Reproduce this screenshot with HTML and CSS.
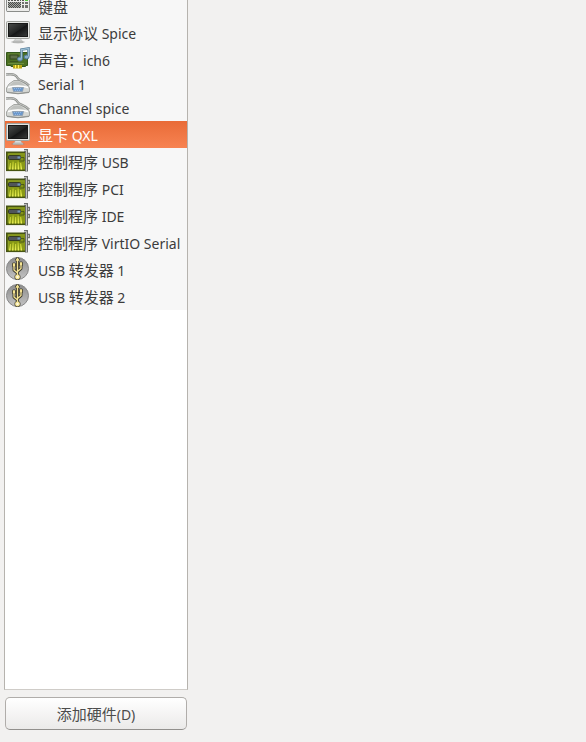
FILE: index.html
```
<!DOCTYPE html>
<html lang="zh-CN">
<head>
<meta charset="utf-8">
<title>虚拟硬件</title>
<link rel="stylesheet" href="styles.css">
</head>
<body>
<svg class="defs" aria-hidden="true">
  <defs>
    <linearGradient id="screen" x1="0" y1="0" x2="1" y2="1">
      <stop offset="0" stop-color="#4b4d4b"/><stop offset=".5" stop-color="#222423"/><stop offset=".55" stop-color="#151616"/><stop offset="1" stop-color="#3b3d3c"/>
    </linearGradient>
    <linearGradient id="metal" x1="0" y1="0" x2="0" y2="1">
      <stop offset="0" stop-color="#f8f8f8"/><stop offset="1" stop-color="#a5a7a5"/>
    </linearGradient>
    <linearGradient id="board" x1="0" y1="0" x2="0" y2="1">
      <stop offset="0" stop-color="#7f9016"/><stop offset="1" stop-color="#8d9d16"/>
    </linearGradient>
    <linearGradient id="pins" x1="0" y1="0" x2="0" y2="1">
      <stop offset="0" stop-color="#b5c421"/><stop offset="1" stop-color="#eef25a"/>
    </linearGradient>
    <linearGradient id="disc" x1="0" y1="0" x2="0" y2="1">
      <stop offset="0" stop-color="#8b8b8b"/><stop offset="1" stop-color="#c4c4c4"/>
    </linearGradient>
    <symbol id="keyboard" viewBox="0 0 24 24">
      <rect x=".5" y="4.500" width="23" height="14" rx="1" fill="#ececea" stroke="#8b8d8a"/>
      <path d="M1 18.500h22" stroke="#8b8d8a"/>
      <path d="M2 7.500h13M16 7.500h2" stroke="#555753" stroke-dasharray="2 1"/>
      <path d="M19 7.500h3" stroke="#55c83d"/>
      <path d="M2 9h13v6H2z" fill="#a3a5a1"/>
      <path d="M2 9.500h13M2 11.500h13M2 13.500h13" stroke="#4a4c49" stroke-dasharray="1 1"/>
      <path d="M3 10.500h12M3 12.500h12M3 14.500h12" stroke="#4a4c49" stroke-dasharray="1 1"/>
      <path d="M16 9h2v2h-2zM19 9h3v2h-3zM16 12h2v3h-2zM19 12h3v3h-3z" fill="#6d6f6b"/>
    </symbol>
    <symbol id="monitor" viewBox="0 0 24 24">
      <ellipse cx="12" cy="22" rx="7" ry="1.500" fill="#888" opacity=".4"/>
      <path d="M9 18h6v2l2 1.500v1H7v-1L9 20z" fill="url(#metal)" stroke="#b1b3b0" stroke-width=".5"/>
      <rect x=".5" y="1.500" width="23" height="17" rx="1" fill="#e4e5e2" stroke="#a0a29d"/>
      <rect x="2.500" y="3.500" width="19" height="13" fill="url(#screen)" stroke="#181918"/>
    </symbol>
    <symbol id="sound" viewBox="0 0 24 24">
      <path d="M.5 5.500h21v13h-2v1H5v-1H.5z" fill="#4c7023" stroke="#34571c"/>
      <path d="M2 7h12M2 16.500h16" stroke="#6c8d3d" fill="none"/>
      <rect x="4" y="8" width="8" height="4" fill="#5f7048" stroke="#34451f"/>
      <path d="M4 14.500h8" stroke="#3b551f"/>
      <path d="M7 18h9v3.500H7z" fill="#baa715"/>
      <path d="M9.500 18v3.500M12.500 18v3.500" stroke="#fff15c"/>
      <path d="M15.500 11.500V2.500l7-1v8" fill="none" stroke="#4d7594" stroke-width="2.500"/>
      <ellipse cx="14" cy="12" rx="2.500" ry="2" fill="#88afc8" stroke="#4d7594"/>
      <ellipse cx="20.500" cy="10" rx="2.500" ry="2" fill="#88afc8" stroke="#4d7594"/>
      <path d="M15.500 11.500V2.500l7-1v8" fill="none" stroke="#9bbfd4" stroke-width="1.300"/>
    </symbol>
    <symbol id="serial" viewBox="0 0 24 24">
      <path d="M8 7.500h7l7 4.500 1.500 3v4q-11.500 3-23 0v-4L3 11z" fill="#d5d7d4" stroke="#a5a7a4"/>
      <path d="M8 8.500h6l5 4H3.500z" fill="#bfc1be"/>
      <path d="M2 14.500q10-3 20 0" fill="none" stroke="#fff" stroke-width="1.500"/>
      <path d="M0 1.500c8-1 10 .5 12 4 2 2.500 7 2.500 11 7" fill="none" stroke="#8f918e" stroke-width="2.500"/>
      <path d="M0 1.500c8-1 10 .5 12 4 2 2.500 7 2.500 11 7" fill="none" stroke="#c8cac7"/>
      <path d="M1 19.500q11 2.500 22 0" fill="none" stroke="#8f918e"/>
      <path d="M6.500 14.500h11l-1 4h-9z" fill="#6c98cc" stroke="#8b99a9" stroke-width=".7"/>
      <path d="M8 15.500h8M9 17.500h6" stroke="#94b8e2" stroke-dasharray="1 1"/>
    </symbol>
    <symbol id="card" viewBox="0 0 24 24">
      <rect x=".8" y="3.300" width="19" height="18" fill="url(#board)" stroke="#465412" stroke-width="1.600"/>
      <path d="M2.500 5h16M2.500 5v15" stroke="#93a42b" stroke-width=".8"/>
      <path d="M4 14l1 .1-.5 6.400H3zM6.500 12.500h1.200l-.2 8H6zM9 14h1.200v6.500H8.800zM11.500 12.500h1.200l.5 8h-1.500zM14 14h1.200l1 6.500h-1.500z" fill="url(#pins)"/>
      <rect x="2.500" y="6.500" width="12" height="4" rx="1" fill="#50555a" stroke="#343b22"/>
      <path d="M11.500 7.500h3v2h-3z" fill="#7195b8"/>
      <path d="M15 8.500h3v3.500h-5" fill="none" stroke="#4b5a16"/>
      <path d="M18 1.500h2.500v21" fill="none" stroke="#6c6e6c" stroke-width="3"/>
      <path d="M18 1.500h2.500v21" fill="none" stroke="#c2c4c1"/>
      <path d="M22 4.500h1.500v3H22M22 11.500h1.500v3H22" fill="none" stroke="#747674" stroke-width="1.500"/>
    </symbol>
    <symbol id="usb" viewBox="0 0 24 24">
      <circle cx="11.500" cy="11.500" r="11" fill="url(#disc)" stroke="#888"/>
      <g fill="#3b392c" stroke="#3b392c" stroke-width="3" stroke-linejoin="round">
        <path d="M11.500 20V3M11.500 16l-3.500-3V8M11.500 14.500l3.500-3V7" fill="none"/><path d="M10.500 3l1-1.500 1 1.500zM7.500 7h1v1.500h-1zM14.500 6h1v1.500h-1z"/><circle cx="11.500" cy="20" r="1.500"/>
      </g>
      <g fill="#fff3a7" stroke="#f5e494" stroke-width="1.300">
        <path d="M11.500 20V3M11.500 16l-3.500-3V8M11.500 14.500l3.500-3V7" fill="none"/><path d="M10.500 3l1-1.500 1 1.500zM7.500 7h1v1.500h-1zM14.500 6h1v1.500h-1z"/><circle cx="11.500" cy="20" r="1.800" fill="#fffbe5"/>
      </g>
    </symbol>
  </defs>
</svg>
<main class="window">
  <aside class="sidebar">
    <ul class="devices">
      <li class="device"><svg class="icon"><use href="#keyboard"/></svg><span>键盘</span></li>
      <li class="device"><svg class="icon"><use href="#monitor"/></svg><span>显示协议<span class="latin"> Spice</span></span></li>
      <li class="device"><svg class="icon"><use href="#sound"/></svg><span>声音：<span class="latin">ich6</span></span></li>
      <li class="device compact"><svg class="icon"><use href="#serial"/></svg><span class="latin">Serial 1</span></li>
      <li class="device compact"><svg class="icon"><use href="#serial"/></svg><span class="latin">Channel spice</span></li>
      <li class="device selected"><svg class="icon"><use href="#monitor"/></svg><span>显卡<span class="latin"> QXL</span></span></li>
      <li class="device"><svg class="icon"><use href="#card"/></svg><span>控制程序<span class="latin"> USB</span></span></li>
      <li class="device"><svg class="icon"><use href="#card"/></svg><span>控制程序<span class="latin"> PCI</span></span></li>
      <li class="device"><svg class="icon"><use href="#card"/></svg><span>控制程序<span class="latin"> IDE</span></span></li>
      <li class="device"><svg class="icon"><use href="#card"/></svg><span>控制程序<span class="latin"> VirtIO Serial</span></span></li>
      <li class="device"><svg class="icon"><use href="#usb"/></svg><span><span class="latin">USB </span>转发器<span class="latin"> 1</span></span></li>
      <li class="device"><svg class="icon"><use href="#usb"/></svg><span><span class="latin">USB </span>转发器<span class="latin"> 2</span></span></li>
    </ul>
    <button class="add" type="button">添加硬件<span class="latin">(D)</span></button>
  </aside>
</main>
</body>
</html>
```
FILE: styles.css
```
* { box-sizing: border-box; }

body {
  margin: 0;
  background: #f2f1f0;
  color: #3c3c3c;
  font: 15px/24px "Noto Sans CJK SC", sans-serif;
}

.defs {
  position: absolute;
  width: 0;
  height: 0;
}

.window {
  display: flex;
  height: 100vh;
  overflow: hidden;
}

.sidebar {
  display: flex;
  flex-direction: column;
  width: 188px;
  padding: 0 0 12px 4px;
}

/* The list is scrolled a little, so its first row is cut by the window edge. */
.devices {
  flex: 1;
  margin: -8px 0 7px;
  padding: 0;
  list-style: none;
  background: #fff;
  border: 1px solid #b6b3ae;
  border-top: 0;
  border-bottom-color: #cfccc8;
}

.device {
  display: flex;
  align-items: flex-end;
  gap: 8px;
  height: 27px;
  padding: 1px 0 0 1px;
  background: #f7f7f7;
  white-space: nowrap;
}

.compact {
  height: 24px;
  padding-top: 0;
}

.selected {
  color: #fff;
  background: linear-gradient(#e96b37, #f78352);
}

.icon {
  flex: none;
  align-self: flex-start;
  width: 24px;
  height: 24px;
}

.latin {
  font-family: "Noto Sans", sans-serif;
  font-size: 14px;
}

.add {
  height: 33px;
  margin: 0 1px;
  padding: 2px 0 0;
  color: #4c4c4c;
  font: inherit;
  background: linear-gradient(#fff, #ebeae9);
  border: 1px solid #b0adaa;
  border-bottom-color: #92908d;
  border-radius: 5px;
}
```
